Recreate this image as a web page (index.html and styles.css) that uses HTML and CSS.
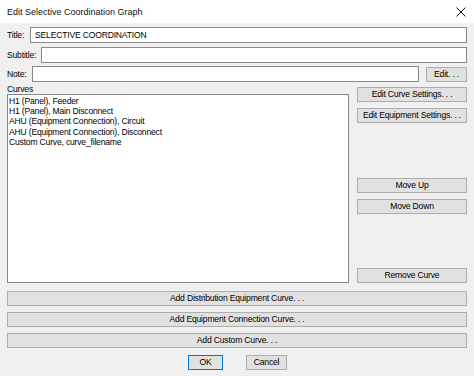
FILE: index.html
```html
<!DOCTYPE html>
<html>
<head>
<meta charset="utf-8">
<link rel="stylesheet" href="styles.css">
</head>
<body>
<div class="window">
  <div class="titlebar">
    <span class="title">Edit Selective Coordination Graph</span>
    <span class="close">
      <svg width="10" height="10" viewBox="0 0 10 10"><path d="M0.5 0.5 L9.5 9.5 M9.5 0.5 L0.5 9.5" stroke="#111" stroke-width="1" fill="none"/></svg>
    </span>
  </div>
  <div class="client">
    <div class="row row-title">
      <label class="lbl lbl-title">Title:</label>
      <div class="input">SELECTIVE COORDINATION</div>
    </div>
    <div class="row row-sub">
      <label class="lbl lbl-sub">Subtitle:</label>
      <div class="input"></div>
    </div>
    <div class="row row-note">
      <label class="lbl lbl-note">Note:</label>
      <div class="input"></div>
      <button class="btn btn-edit">Edit. . .</button>
    </div>
    <div class="main">
      <div class="left">
        <div class="curves-lbl">Curves</div>
        <div class="listbox">
          <div class="item">H1 (Panel), Feeder</div>
          <div class="item">H1 (Panel), Main Disconnect</div>
          <div class="item">AHU (Equipment Connection), Circuit</div>
          <div class="item">AHU (Equipment Connection), Disconnect</div>
          <div class="item">Custom Curve, curve_filename</div>
        </div>
      </div>
      <div class="right">
        <button class="btn side">Edit Curve Settings. . .</button>
        <button class="btn side gap6">Edit Equipment Settings. . .</button>
        <button class="btn side moveup">Move Up</button>
        <button class="btn side gap6">Move Down</button>
        <button class="btn side remove">Remove Curve</button>
      </div>
    </div>
    <button class="btn wide first">Add Distribution Equipment Curve. . .</button>
    <button class="btn wide">Add Equipment Connection Curve. . .</button>
    <button class="btn wide">Add Custom Curve. . .</button>
    <div class="footer">
      <button class="btn ok">OK</button>
      <button class="btn cancel">Cancel</button>
    </div>
  </div>
</div>
</body>
</html>
```

FILE: styles.css
```css
html, body {
  margin: 0;
  padding: 0;
  background: #f0f0f0;
}
.window {
  width: 474px;
  height: 376px;
  font-family: "Liberation Sans", Arial, sans-serif;
  font-size: 8.6px;
  letter-spacing: -0.2px;
  color: #000;
  background: #f0f0f0;
  overflow: hidden;
  box-sizing: border-box;
}
.titlebar {
  height: 23px;
  background: #fff;
  display: flex;
  align-items: center;
  justify-content: space-between;
  padding: 0 7px;
  box-sizing: border-box;
}
.title {
  font-size: 9px;
  letter-spacing: 0;
  color: #111;
}
.close {
  display: flex;
  width: 10px;
  height: 10px;
  margin-right: 1px;
}
.client {
  padding: 4px 7px 0 7px;
  display: flex;
  flex-direction: column;
}
.row {
  display: flex;
  align-items: center;
  height: 16px;
}
.row-sub { margin-top: 4px; }
.row-note { margin-top: 3px; }
.lbl {
  white-space: nowrap;
  flex: none;
}
.lbl-title { width: 23px; }
.lbl-sub { width: 34px; }
.lbl-note { width: 25px; }
.input {
  flex: 1;
  height: 16px;
  box-sizing: border-box;
  background: #fff;
  border: 1px solid #8a8a8a;
  padding: 0 4px;
  line-height: 14px;
  white-space: nowrap;
}
.btn {
  font-family: inherit;
  font-size: 8.6px;
  letter-spacing: -0.2px;
  color: #000;
  background: #e1e1e1;
  border: 1px solid #adadad;
  padding: 0;
  margin: 0;
  height: 15px;
  box-sizing: border-box;
  line-height: 13px;
  text-align: center;
  white-space: nowrap;
}
.btn-edit {
  width: 41px;
  margin-left: 7px;
  flex: none;
}
.main {
  display: flex;
  margin-top: 3px;
  height: 198px;
}
.left {
  display: flex;
  flex-direction: column;
  width: 342px;
}
.curves-lbl {
  height: 9px;
  line-height: 9px;
}
.listbox {
  flex: 1;
  background: #fff;
  border: 1px solid #828790;
  box-sizing: border-box;
  padding: 1px;
}
.item {
  height: 10.2px;
  line-height: 10px;
  white-space: nowrap;
}
.right {
  display: flex;
  flex-direction: column;
  margin-left: 8px;
  flex: 1;
  padding-top: 2px;
}
.side { width: 100%; }
.gap6 { margin-top: 6px; }
.moveup { margin-top: 55px; }
.remove { margin-top: auto; }
.wide {
  width: 100%;
  margin-top: 6px;
}
.wide.first { margin-top: 8px; }
.footer {
  display: flex;
  margin-top: 7px;
  padding-left: 181px;
}
.ok {
  width: 35px;
  border-color: #0078d7;
}
.cancel {
  width: 41px;
  margin-left: 23px;
}
```
